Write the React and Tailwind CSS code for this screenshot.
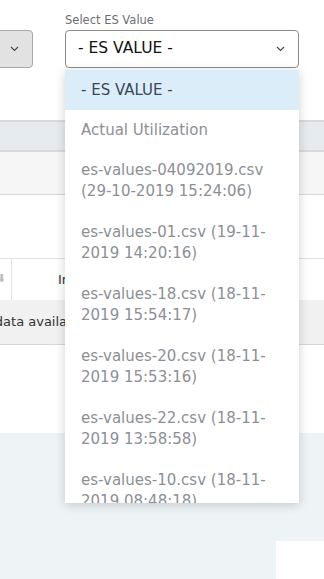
import {useState} from "react";

const options = [
    ["- ES VALUE -"],
    ["Actual Utilization"],
    ["es-values-04092019.csv", "(29-10-2019 15:24:06)"],
    ["es-values-01.csv (19-11-", "2019 14:20:16)"],
    ["es-values-18.csv (18-11-", "2019 15:54:17)"],
    ["es-values-20.csv (18-11-", "2019 15:53:16)"],
    ["es-values-22.csv (18-11-", "2019 13:58:58)"],
    ["es-values-10.csv (18-11-", "2019 08:48:18)"],
];

function Chevron() {
    return (
        <svg width="9" height="6" viewBox="0 0 9 6" fill="none">
            <polyline points="1,1 4.5,4.5 8,1" stroke="#444" strokeWidth="1.1"/>
        </svg>
    );
}

function App() {
    const [selected] = useState(0);

    return (
        <div className="relative w-[324px] h-[579px] overflow-hidden bg-[#eef3f6]" style={{fontFamily: '"DejaVu Sans", "Open Sans", sans-serif'}}>
            {/* filters */}
            <div className="h-[120px] bg-white flex gap-[32px] pt-[12px]">
                <div className="flex flex-col ml-[-40px]">
                    <div className="h-[16px]"></div>
                    <div className="mt-[2px] w-[73px] h-[38px] bg-[#e2e2e2] border border-[#a8a8a8] rounded-[4px] flex items-center justify-end pr-[13px]">
                        <Chevron/>
                    </div>
                </div>
                <div className="flex flex-col">
                    <span className="text-[11.5px] leading-[16px] text-[#6b6f74]">Select ES Value</span>
                    <div className="mt-[2px] w-[234px] h-[38px] bg-white border border-[#8c8c8c] rounded-[4px] flex items-center justify-between pl-[12px] pr-[13px]">
                        <span className="text-[15.5px] text-[#111]">- ES VALUE -</span>
                        <Chevron/>
                    </div>
                </div>
            </div>

            {/* card */}
            <div className="h-[313px] bg-white flex flex-col">
                <div className="h-[32px] bg-[#e6ebef] border-y-2 border-[#d6dadd]"></div>
                <div className="h-[43px] bg-[#f6f6f6] border-b border-[#d8d8d8]"></div>
                <div className="h-[63px]"></div>
                <div className="h-[42px] border-t border-[#e2e2e2] flex">
                    <div className="w-[12px] border-r border-[#e2e2e2] flex items-center overflow-hidden">
                        <span className="text-[11px] text-[#bbb] ml-[-3px]">⬇</span>
                    </div>
                    <div className="flex-1 flex items-center pl-[46px] text-[13px] text-[#333]">Info</div>
                </div>
                <div className="h-[45px] bg-[#f1f1f1] border-b border-[#d8d8d8] flex items-center text-[13px] text-[#333] overflow-hidden">
                    <span className="whitespace-nowrap ml-[-27px]">No data available</span>
                </div>
            </div>

            <div className="absolute right-0 top-[541px] w-[48px] h-[40px] bg-white"></div>

            {/* dropdown */}
            <div className="absolute left-[65px] top-[70px] w-[234px] h-[433px] overflow-hidden bg-white shadow-[0_2px_10px_rgba(0,0,0,0.18)]">
                {options.map((opt, i) => (
                    <div key={i} className={(i === selected ? 'bg-[#dcedfa] text-[#37485a] ' : 'text-[#8b9096] ') + (opt.length > 1 ? 'leading-[21px] ' : 'leading-[20px] ') + 'px-[16px] py-[10px] text-[15px]'}>
                        {opt.map((line, j) => (
                            <div key={j} className="whitespace-nowrap">{line}</div>
                        ))}
                    </div>
                ))}
            </div>
        </div>
    );
}

export default App;
